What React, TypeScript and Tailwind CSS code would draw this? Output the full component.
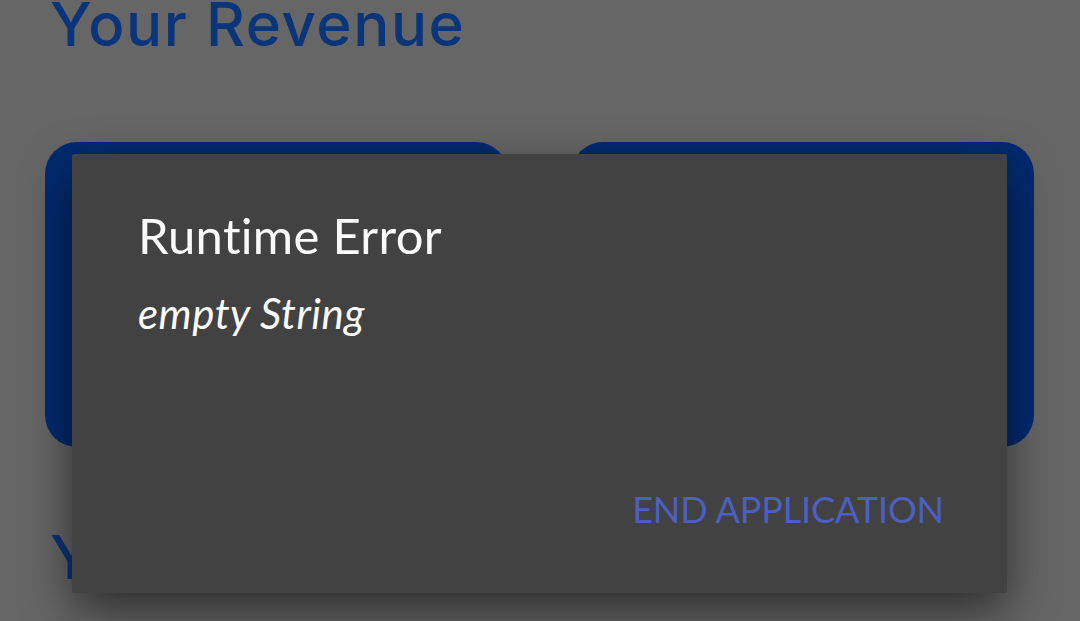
import React from 'react'

const RevenueCard = () => (
  <div className="h-[305px] rounded-[32px] bg-[#032a70]" />
)

const RuntimeErrorDialog = () => (
  <div className="absolute left-[72px] top-[154px] w-[935px] h-[439px] bg-[#424242] rounded-[3px] shadow-[0_18px_48px_rgba(0,0,0,0.55)] flex flex-col pl-[66px] pr-[63px] pt-[52px] pb-[63px] font-['Lato',sans-serif]">
    <h2 className="text-[49px] leading-[58px] text-[#fafafa] tracking-[0.3px]">Runtime Error</h2>
    <p className="mt-[24px] text-[42px] leading-[50px] text-[#fafafa] italic tracking-[0.5px]">empty String</p>
    <div className="mt-auto flex justify-end">
      <button type="button" className="text-[36px] leading-[42px] text-[#4c5fc2] uppercase tracking-[-0.1px]">
        End Application
      </button>
    </div>
  </div>
)

export default function App() {
  return (
    <div className="relative w-[1080px] h-[621px] overflow-hidden bg-[#666666] font-['Inter',sans-serif]">
      {/* page behind the dialog, dimmed */}
      <div className="flex flex-col px-[45px]">
        <h1 className="-mt-[6px] pl-[5px] text-[60px] leading-[60px] font-medium text-[#0a357a] tracking-[1.6px]">
          Your Revenue
        </h1>
        <div className="mt-[88px] grid grid-cols-2 gap-[63px] pr-[1px]">
          <RevenueCard />
          <RevenueCard />
        </div>
        <h1 className="mt-[80px] pl-[5px] text-[60px] leading-[60px] font-medium text-[#0a357a] tracking-[1.6px]">
          Your Expenses
        </h1>
      </div>

      <RuntimeErrorDialog />
    </div>
  )
}
